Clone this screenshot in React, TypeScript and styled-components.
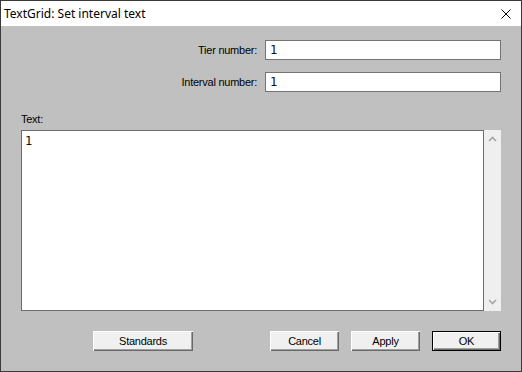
import React from 'react';
import styled, {createGlobalStyle} from 'styled-components';

const GlobalStyle = createGlobalStyle`
    html, body {
        margin: 0;
        padding: 0;
        background: #ffffff;
    }
`;

const Window = styled.div`
    width: 522px;
    height: 372px;
    box-sizing: border-box;
    border: 1px solid #3a3a3a;
    display: flex;
    flex-direction: column;
    font-family: "Liberation Sans", Arial, sans-serif;
`;

const TitleBar = styled.div`
    height: 25px;
    background: #ffffff;
    display: flex;
    align-items: center;
    justify-content: space-between;
    padding-left: 3px;
`;

const Title = styled.span`
    font-family: "Noto Sans", "Open Sans", sans-serif;
    font-size: 12px;
    color: #000000;
`;

const CloseButton = styled.div`
    width: 10px;
    height: 10px;
    margin-right: 10px;
    display: flex;
`;

const Body = styled.div`
    flex: 1;
    background: #c0c0c0;
    padding: 14px 20px 20px 20px;
    display: flex;
    flex-direction: column;
`;

const FormGrid = styled.div`
    display: grid;
    grid-template-columns: 1fr 236px;
    column-gap: 8px;
    row-gap: 12px;
`;

const Label = styled.label`
    font-size: 11px;
    letter-spacing: -0.25px;
    color: #000000;
    display: flex;
    align-items: center;
    justify-content: flex-end;
`;

const Field = styled.input`
    height: 20px;
    box-sizing: border-box;
    border: 1px solid #747474;
    background: #ffffff;
    padding: 0 4px;
    margin: 0;
    font-family: "DejaVu Sans Mono", "Liberation Mono", monospace;
    font-size: 12px;
    color: #111111;
    outline: none;
`;

const TextLabel = styled.div`
    margin-top: 20px;
    line-height: 14px;
    font-size: 11px;
    letter-spacing: -0.25px;
    color: #000000;
`;

const TextBox = styled.div`
    margin-top: 4px;
    height: 181px;
    display: flex;
`;

const TextArea = styled.textarea`
    flex: 1;
    box-sizing: border-box;
    height: 100%;
    margin: 0;
    border: 1px solid #6d6d6d;
    background: #ffffff;
    padding: 3px 3px;
    resize: none;
    overflow: hidden;
    font-family: "DejaVu Sans Mono", "Liberation Mono", monospace;
    font-size: 12px;
    line-height: 15px;
    color: #111111;
    outline: none;
`;

const ScrollTrack = styled.div`
    width: 17px;
    background: #efefef;
    display: flex;
    flex-direction: column;
    justify-content: space-between;
    align-items: center;
    padding: 6px 0;
    box-sizing: border-box;
`;

const ButtonRow = styled.div`
    margin-top: 20px;
    display: flex;
    align-items: center;
`;

const ButtonGroup = styled.div`
    margin-left: auto;
    display: flex;
    gap: 12px;
`;

const Button = styled.button<{$wide?: boolean; $default?: boolean}>`
    width: ${(p) => (p.$wide ? '100px' : '69px')};
    height: 20px;
    margin: 0 0 0 ${(p) => (p.$wide ? '72px' : '0')};
    padding: 0;
    border: none;
    background: #f0f0f0;
    font-family: "Liberation Sans", Arial, sans-serif;
    font-size: 11px;
    letter-spacing: -0.25px;
    color: #000000;
    box-shadow: ${(p) => (p.$default ?
        'inset 0 0 0 1px #000000, inset 2px 2px #ffffff, inset -2px -2px #696969, inset -3px -3px #a0a0a0' :
        'inset 1px 1px #ffffff, inset -1px -1px #696969, inset -2px -2px #a0a0a0')};
`;

const Chevron = ({up}: {up?: boolean}) => (
    <svg
        width='9'
        height='6'
        viewBox='0 0 9 6'
    >
        <path
            d={up ? 'M1 5 L4.5 1.5 L8 5' : 'M1 1 L4.5 4.5 L8 1'}
            stroke='#a6a6a6'
            strokeWidth='1.6'
            fill='none'
        />
    </svg>
);

export default function App() {
    return (
        <Window>
            <GlobalStyle/>
            <TitleBar>
                <Title>{'TextGrid: Set interval text'}</Title>
                <CloseButton>
                    <svg
                        width='10'
                        height='10'
                        viewBox='0 0 10 10'
                    >
                        <path
                            d='M0.5 0.5 L9.5 9.5 M9.5 0.5 L0.5 9.5'
                            stroke='#000000'
                            strokeWidth='1'
                        />
                    </svg>
                </CloseButton>
            </TitleBar>
            <Body>
                <FormGrid>
                    <Label>{'Tier number:'}</Label>
                    <Field defaultValue='1'/>
                    <Label>{'Interval number:'}</Label>
                    <Field defaultValue='1'/>
                </FormGrid>
                <TextLabel>{'Text:'}</TextLabel>
                <TextBox>
                    <TextArea defaultValue='1'/>
                    <ScrollTrack>
                        <Chevron up={true}/>
                        <Chevron/>
                    </ScrollTrack>
                </TextBox>
                <ButtonRow>
                    <Button $wide={true}>{'Standards'}</Button>
                    <ButtonGroup>
                        <Button>{'Cancel'}</Button>
                        <Button>{'Apply'}</Button>
                        <Button $default={true}>{'OK'}</Button>
                    </ButtonGroup>
                </ButtonRow>
            </Body>
        </Window>
    );
}
